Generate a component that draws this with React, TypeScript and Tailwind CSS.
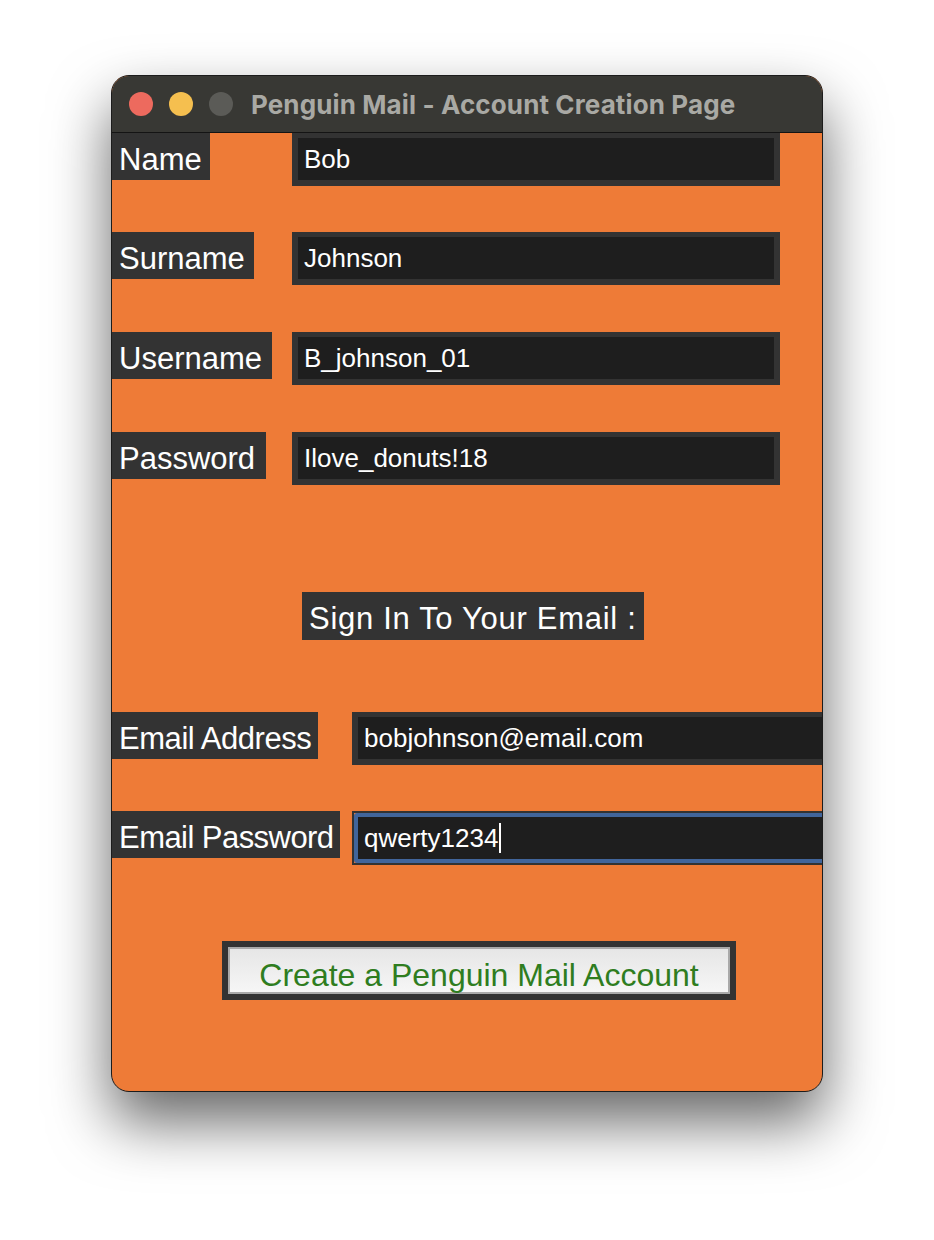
import React from 'react'

const labelCls =
  'h-[47px] shrink-0 bg-[#333333] pl-[7px] pt-[6px] text-[31px] leading-[41px] text-white whitespace-nowrap'

function Field({ value, focused, wide }: { value: string; focused?: boolean; wide?: boolean }) {
  if (focused) {
    return (
      <div className="h-[54px] w-[480px] shrink-0 border-2 border-[#333333]">
        <div className="flex h-full items-center rounded-[3px] border-[4px] border-[#41659b] bg-[#1e1e1e] pl-[6px] text-[26px] text-white">
          <span>{value}</span>
          <span className="ml-[1px] h-[30px] w-[2px] bg-white" />
        </div>
      </div>
    )
  }
  return (
    <div
      className={
        'flex h-[53px] shrink-0 items-center border-x-[6px] border-t-[5px] border-b-[6px] border-[#333333] bg-[#1e1e1e] pl-[6px] text-[26px] text-white ' +
        (wide ? 'w-[480px]' : 'w-[488px]')
      }
    >
      {value}
    </div>
  )
}

function Row({ label, value, labelWidth, boxWidth, focused, wide }: {
  label: string
  value: string
  labelWidth: string
  boxWidth: string
  focused?: boolean
  wide?: boolean
}) {
  return (
    <div className="flex items-start">
      <div className={labelWidth + ' shrink-0'}>
        <div className={labelCls + ' ' + boxWidth}>{label}</div>
      </div>
      <Field value={value} focused={focused} wide={wide} />
    </div>
  )
}

export default function App() {
  return (
    <div className="min-h-[1240px] bg-white pl-[111px] pt-[75px] font-['Liberation_Sans',Arial,sans-serif]">
      <div className="flex h-[1017px] w-[712px] flex-col overflow-hidden rounded-[18px] border border-[#1c1c1c] bg-[#ee7b37] shadow-[0_30px_60px_rgba(0,0,0,0.6)]">
        {/* Title bar */}
        <div className="flex h-[57px] shrink-0 items-center border-b border-[#141414] bg-[#383834] pl-[17px]">
          <div className="flex gap-[16px]">
            <span className="h-[24px] w-[24px] rounded-full bg-[#ed6a5e]" />
            <span className="h-[24px] w-[24px] rounded-full bg-[#f5bf4f]" />
            <span className="h-[24px] w-[24px] rounded-full bg-[#5b5b57]" />
          </div>
          <div className="ml-[18px] font-['Inter',sans-serif] text-[26px] font-bold tracking-[0.12px] text-[#a9a9a4]">
            Penguin Mail - Account Creation Page
          </div>
        </div>

        {/* Form */}
        <div className="flex flex-col">
          <Row label="Name" value="Bob" labelWidth="w-[180px]" boxWidth="w-[98px]" />
          <div className="mt-[46px]">
            <Row label="Surname" value="Johnson" labelWidth="w-[180px]" boxWidth="w-[142px]" />
          </div>
          <div className="mt-[47px]">
            <Row label="Username" value="B_johnson_01" labelWidth="w-[180px]" boxWidth="w-[160px]" />
          </div>
          <div className="mt-[47px]">
            <Row label="Password" value="Ilove_donuts!18" labelWidth="w-[180px]" boxWidth="w-[154px]" />
          </div>

          <div className="mt-[107px] flex pl-[190px]">
            <div className="h-[48px] w-[342px] bg-[#333333] pl-[7px] pt-[6px] text-[31px] leading-[42px] tracking-[0.7px] text-white whitespace-nowrap">
              Sign In To Your Email :
            </div>
          </div>

          <div className="mt-[72px]">
            <Row label="Email Address" value="bobjohnson@email.com" labelWidth="w-[240px]" boxWidth="w-[206px] tracking-[-0.45px]" wide />
          </div>
          <div className="mt-[46px]">
            <Row label="Email Password" value="qwerty1234" labelWidth="w-[240px]" boxWidth="w-[228px] tracking-[-0.55px]" focused />
          </div>

          <div className="mt-[76px] flex pl-[110px]">
            <div className="h-[59px] w-[514px] border-[6px] border-[#333333]">
              <div className="flex h-full items-center justify-center border-2 border-[#a9a9a9] bg-gradient-to-b from-[#e6e6e6] to-[#f6f6f6] pt-[8px] text-[32px] leading-[36px] text-[#2f7d1f]">
                Create a Penguin Mail Account
              </div>
            </div>
          </div>
        </div>
      </div>
    </div>
  )
}
